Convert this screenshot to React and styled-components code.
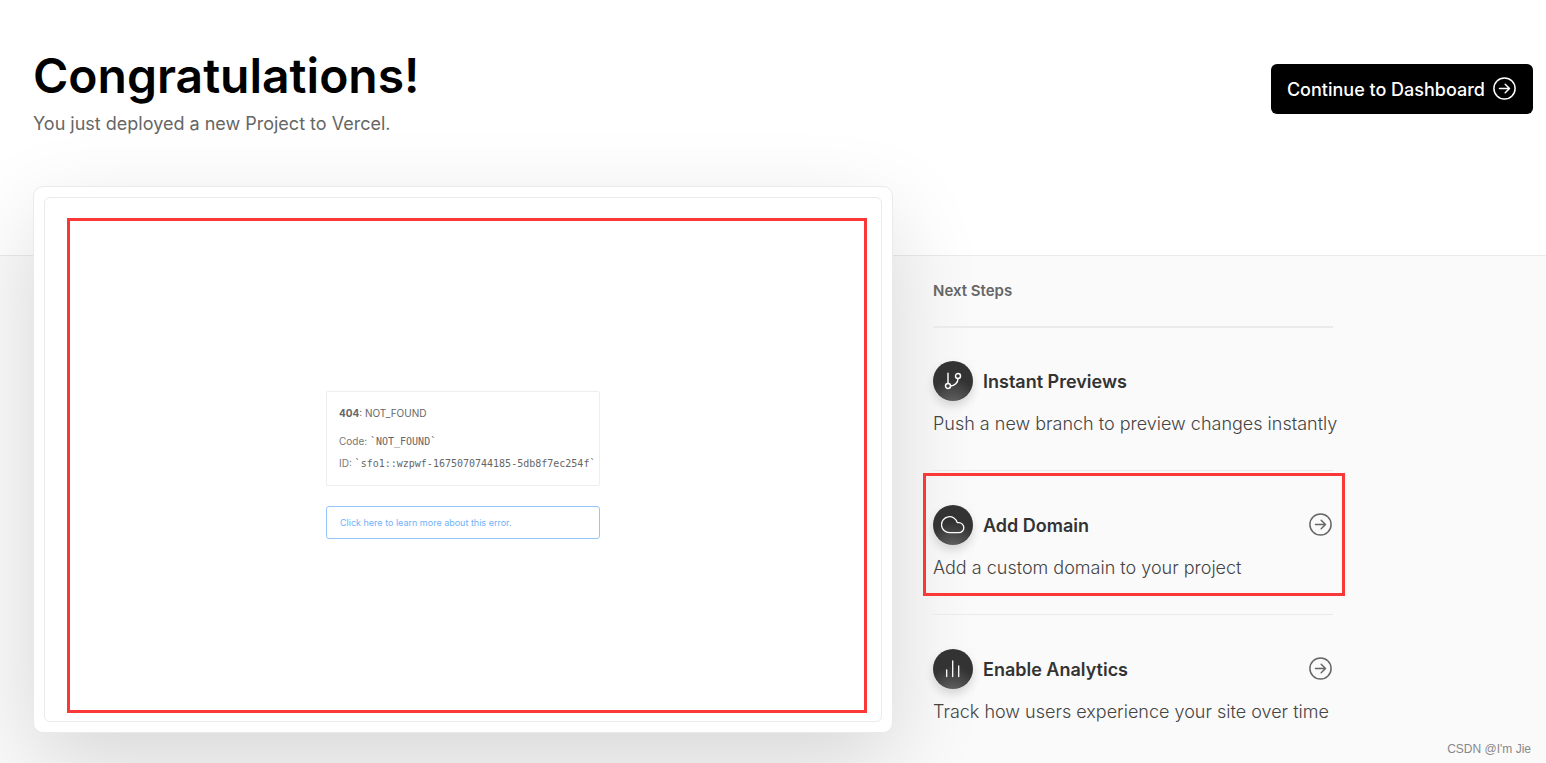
import React from "react";
import styled, { createGlobalStyle } from "styled-components";

const steps = [
	{ icon: "branch", title: "Instant Previews", text: "Push a new branch to preview changes instantly" },
	{ icon: "cloud", title: "Add Domain", text: "Add a custom domain to your project", link: true, marked: true },
	{ icon: "chart", title: "Enable Analytics", text: "Track how users experience your site over time", link: true },
]

export default function App() {
	return (
		<Page>
			<GlobalStyle />
			<Header>
				<div>
					<Title>Congratulations!</Title>
					<Subtitle>You just deployed a new Project to Vercel.</Subtitle>
				</div>
				<DashboardButton type="button">
					Continue to Dashboard
					<ArrowIcon />
				</DashboardButton>
			</Header>
			<Content>
				<Card>
					<Preview>
						<ErrorBox>
							<ErrorTitle><b>404</b>: NOT_FOUND</ErrorTitle>
							<ErrorLine>Code: <Code>`NOT_FOUND`</Code></ErrorLine>
							<ErrorLine>ID: <Code>`sfo1::wzpwf-1675070744185-5db8f7ec254f`</Code></ErrorLine>
						</ErrorBox>
						<ErrorLink href="#error">Click here to learn more about this error.</ErrorLink>
						<PreviewMark />
					</Preview>
				</Card>
				<Steps>
					<StepsTitle>Next Steps</StepsTitle>
					<StepList>
						{steps.map((step) => (
							<Step key={step.title}>
								<StepHead>
									<StepIcon><Icon name={step.icon} /></StepIcon>
									<StepTitle>{step.title}</StepTitle>
									{step.link && <StepLink href="#step" aria-label={step.title}><ArrowIcon /></StepLink>}
								</StepHead>
								<StepText>{step.text}</StepText>
								{step.marked && <StepMark />}
							</Step>
						))}
					</StepList>
				</Steps>
			</Content>
			<Credit>CSDN @I'm Jie</Credit>
		</Page>
	)
}

function ArrowIcon() {
	return (
		<Svg width="24" height="24" viewBox="0 0 24 24">
			<circle cx="11.5" cy="11.5" r="10.6" />
			<path d="M6.5 11.5h10M12.2 7.3l4.3 4.2-4.3 4.2" />
		</Svg>
	)
}

function Icon({ name }) {
	if (name === "branch") {
		return (
			<Svg width="20" height="20" viewBox="0 0 24 24" $stroke="1.7">
				<path d="M6 2.5V15M18 9a9 9 0 0 1-9 9" />
				<circle cx="18" cy="6" r="3" />
				<circle cx="6" cy="18" r="3" />
			</Svg>
		)
	}
	if (name === "cloud") {
		return (
			<Svg width="24" height="24" viewBox="0 0 24 24" $stroke="1.3">
				<path d="M17.5 9.7h-1.26A8 8 0 1 0 8.5 19.7h9.3a5 5 0 0 0 0-10z" />
			</Svg>
		)
	}
	return (
		<Svg width="24" height="24" viewBox="0 0 24 24" $stroke="1.3">
			<path d="M17.7 19.5V9M11.7 19.5V4M5.7 19.5v-6.5" />
		</Svg>
	)
}

const GlobalStyle = createGlobalStyle`
* {
box-sizing: border-box;
}
body {
margin: 0;
background: #fff;
font-family: Inter, "Liberation Sans", sans-serif;
}
`
const Page = styled.div`
position: relative;
display: flex;
flex-direction: column;
min-height: 100vh;
overflow: hidden;
`
const Header = styled.header`
display: flex;
align-items: center;
justify-content: space-between;
padding: 41px 13px 118px 33px;
`
const Title = styled.h1`
margin: 0;
font-size: 48px;
line-height: 69px;
font-weight: 600;
color: #000;
`
const Subtitle = styled.p`
margin: 0;
font-size: 18px;
line-height: 27px;
color: #666;
`
const DashboardButton = styled.button`
display: flex;
align-items: center;
gap: 8px;
height: 50px;
padding: 0 16px;
border: none;
border-radius: 6px;
background: #000;
color: #fff;
font-family: inherit;
font-size: 18px;
font-weight: 500;
white-space: nowrap;
cursor: pointer;
`
const Svg = styled.svg`
flex: none;
fill: none;
stroke: currentColor;
stroke-width: ${props => props.$stroke || 1.5};
stroke-linecap: round;
stroke-linejoin: round;
`
const Content = styled.main`
flex: 1;
display: grid;
grid-template-columns: minmax(0, 860px) minmax(0, 400px);
align-items: start;
gap: 40px;
padding: 0 33px 30px;
border-top: 1px solid #eaeaea;
background: #fafafa;
`
const Card = styled.section`
margin-top: -70px;
padding: 10px;
border: 1px solid #eaeaea;
border-radius: 10px;
background: #fff;
box-shadow: 0 30px 90px rgba(0, 0, 0, 0.14);
`
const Preview = styled.div`
position: relative;
display: flex;
flex-direction: column;
align-items: center;
justify-content: center;
gap: 20px;
aspect-ratio: 838 / 525;
padding-top: 10px;
border: 1px solid #eaeaea;
border-radius: 6px;
`
const ErrorBox = styled.div`
width: 274px;
padding: 12px 12px 11px;
border: 1px solid #eee;
border-radius: 2px;
color: #666;
`
const ErrorTitle = styled.p`
margin: 0 0 8px;
font-size: 10px;
line-height: 18px;
`
const ErrorLine = styled.p`
margin: 0;
font-size: 10px;
line-height: 22px;
white-space: nowrap;
color: #777;
`
const Code = styled.code`
font-family: "DejaVu Sans Mono", monospace;
font-size: 10px;
line-height: 1;
color: #666;
`
const ErrorLink = styled.a`
width: 274px;
padding: 0 13px;
border: 1px solid #94c5fb;
border-radius: 3px;
font-size: 9px;
line-height: 31px;
color: #6fb1f8;
text-decoration: none;
`
const PreviewMark = styled.div`
position: absolute;
inset: 20px 14px 8px 22px;
border: 3px solid #fb3838;
pointer-events: none;
`
const Steps = styled.section`
padding-top: 23px;
`
const StepsTitle = styled.h2`
margin: 0;
padding-bottom: 23px;
border-bottom: 1px solid #eaeaea;
font-size: 15px;
line-height: 24px;
font-weight: 600;
color: #666;
`
const StepList = styled.ul`
margin: 0;
padding: 0;
list-style: none;
`
const Step = styled.li`
position: relative;
padding: 34px 0 33px;
border-top: 1px solid #eaeaea;
&:first-child {
padding-top: 33px;
}
&:last-child {
padding-bottom: 0;
}
`
const StepHead = styled.div`
display: flex;
align-items: center;
gap: 10px;
margin-bottom: 9px;
`
const StepIcon = styled.span`
display: flex;
align-items: center;
justify-content: center;
width: 40px;
height: 40px;
border-radius: 50%;
background: radial-gradient(circle at 50% 110%, #666 0%, #333 55%);
box-shadow: 0 5px 10px rgba(0, 0, 0, 0.14);
color: #fff;
`
const StepTitle = styled.h3`
margin: 0;
font-size: 18px;
line-height: 27px;
font-weight: 600;
color: #333;
`
const StepLink = styled.a`
display: flex;
margin-left: auto;
color: #666;
`
const StepText = styled.p`
margin: 0;
font-size: 18px;
line-height: 27px;
font-weight: 300;
white-space: nowrap;
color: #444;
`
const StepMark = styled.div`
position: absolute;
inset: 2px -12px 18px -10px;
border: 3px solid #fb3838;
pointer-events: none;
`
const Credit = styled.small`
position: absolute;
right: 15px;
bottom: 6px;
font-family: "Liberation Sans", sans-serif;
font-size: 12px;
line-height: 16px;
color: #888;
`
